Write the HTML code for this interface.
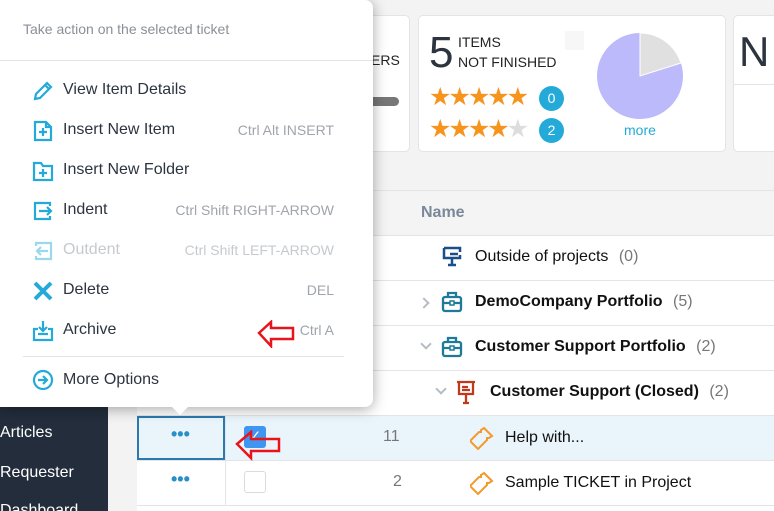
<!DOCTYPE html>
<html><head><meta charset="utf-8"><style>
*{box-sizing:border-box;margin:0;padding:0}
html,body{width:774px;height:511px;overflow:hidden}
body{background:#f3f3f3;font-family:"Liberation Sans",sans-serif;position:relative}
.abs{position:absolute}
.side{left:0;top:0;width:108px;height:511px;background:#232d3b}
.side div{position:absolute;left:0;color:#fff;font-size:16px}
.card{background:#fff;border:1px solid #e2e4e8;border-radius:5px;top:15px;height:137px}
.table{left:137px;top:190px;width:637px;height:321px;background:#fff;border-top:1px solid #e2e4e8}
.row{position:absolute;left:137px;width:637px;border-bottom:1px solid #e2e4e8;background:#fff}
.txt{position:absolute;font-size:16px;color:#111}
.pop{left:0;top:0;width:373px;height:407px;background:#fff;border-radius:0 8px 8px 0;box-shadow:0 2px 14px rgba(0,0,0,.35)}
.mi{position:absolute;left:63px;font-size:16px;color:#2c3440}
.sc{position:absolute;right:39px;font-size:14px;color:#a0a4ab}
.ic{position:absolute;left:32px;width:22px;height:22px}
.star{color:#f7941d;font-size:25px;letter-spacing:-3px}
.chev{position:absolute;width:8px;height:8px;border-right:2px solid #b5bcc4;border-bottom:2px solid #b5bcc4}
.dots{position:absolute;color:#2a8fc7;font-size:18px;font-weight:bold;letter-spacing:0px}
</style></head><body>
<div class="abs side">
<div style="top:424px">Articles</div>
<div style="top:464px">Requester</div>
<div style="top:502px">Dashboard</div>
</div>
<div class="abs card" style="left:300px;width:110px"><div class="abs" style="left:70px;top:36px;font-size:14px;color:#222">ERS</div><div class="abs" style="left:60px;top:81px;width:38px;height:9px;border-radius:5px;background:#777"></div></div>
<div class="abs card" style="left:418px;width:308px">
<div class="abs" style="left:10px;top:12px;font-size:44px;color:#2c3440;font-weight:300">5</div>
<div class="abs" style="left:39px;top:16px;font-size:14px;color:#222;line-height:20px">ITEMS<br>NOT FINISHED</div>
<div class="abs" style="left:146px;top:15px;width:19px;height:19px;background:#f7f7f7"></div>
<div class="abs star" style="left:10px;top:66px">★★★★★</div>
<div class="abs star" style="left:10px;top:98px">★★★★<span style="color:#ddd">★</span></div>
<div class="abs" style="left:120px;top:70px;width:25px;height:25px;border-radius:50%;background:#24aad8;color:#fff;font-size:14px;text-align:center;line-height:25px">0</div>
<div class="abs" style="left:120px;top:102px;width:25px;height:25px;border-radius:50%;background:#24aad8;color:#fff;font-size:14px;text-align:center;line-height:25px">2</div>
<svg class="abs" style="left:176px;top:15px" width="90" height="90" viewBox="-45 -45 90 90"><circle r="43" fill="#bdbafc"/><path d="M0 0 L0 -43 A43 43 0 0 1 41 -13 Z" fill="#e0e0e0" stroke="#fff" stroke-width="1"/></svg>
<div class="abs" style="left:205px;top:106px;font-size:14px;color:#24aad8">more</div>
</div>
<div class="abs card" style="left:733px;width:60px;border-radius:5px 0 0 5px"><div class="abs" style="left:5px;top:12px;font-size:42px;color:#2c3440">N</div><div class="abs" style="left:0;top:68px;width:60px;border-top:1px solid #e2e4e8"></div></div>
<div class="abs table"></div>
<div class="row" style="top:191px;height:45px;background:#f4f4f4"><div class="txt" style="left:284px;top:13px;color:#7a8899;font-weight:bold;font-size:16px">Name</div></div>
<div class="row" style="top:236px;height:45px"><svg class="abs" style="left:304px;top:9px" width="22" height="24" viewBox="0 0 22 24"><path d="M3 3h16v4M3 3v10h16V10M9 9h8M11 13v6M7 20h8" fill="none" stroke="#1b4f8a" stroke-width="2.5"/></svg><div class="txt" style="left:338px;top:12px">Outside of projects <span style="color:#777;margin-left:6px">(0)</span></div></div>
<div class="row" style="top:281px;height:45px"><div class="chev" style="left:283px;top:18px;transform:rotate(-45deg)"></div><svg class="abs" style="left:304px;top:9px" width="22" height="24" viewBox="0 0 22 24"><rect x="2" y="7" width="18" height="14" rx="2" fill="none" stroke="#1e7a96" stroke-width="2.3"/><path d="M7 7V3h8v4M2 13h18" fill="none" stroke="#1e7a96" stroke-width="2.3"/><rect x="9" y="11" width="4" height="4" fill="#fff" stroke="#1e7a96" stroke-width="1.5"/></svg><div class="txt" style="left:338px;top:12px;font-weight:bold">DemoCompany&nbsp;Portfolio <span style="color:#777;font-weight:normal;margin-left:6px">(5)</span></div></div>
<div class="row" style="top:326px;height:45px"><div class="chev" style="left:285px;top:14px;transform:rotate(45deg)"></div><svg class="abs" style="left:304px;top:9px" width="22" height="24" viewBox="0 0 22 24"><rect x="2" y="7" width="18" height="14" rx="2" fill="none" stroke="#1e7a96" stroke-width="2.3"/><path d="M7 7V3h8v4M2 13h18" fill="none" stroke="#1e7a96" stroke-width="2.3"/><rect x="9" y="11" width="4" height="4" fill="#fff" stroke="#1e7a96" stroke-width="1.5"/></svg><div class="txt" style="left:338px;top:12px;font-weight:bold">Customer Support Portfolio <span style="color:#777;font-weight:normal;margin-left:6px">(2)</span></div></div>
<div class="row" style="top:371px;height:45px"><div class="chev" style="left:300px;top:14px;transform:rotate(45deg)"></div><svg class="abs" style="left:318px;top:8px" width="22" height="26" viewBox="0 0 22 26"><path d="M2 3h18M4 3v12h14V3M7 8h6M7 11h8M11 15v9M8 24h6" fill="none" stroke="#c0391b" stroke-width="2.3"/></svg><div class="txt" style="left:353px;top:12px;font-weight:bold">Customer Support (Closed) <span style="color:#777;font-weight:normal;margin-left:6px">(2)</span></div></div>
<div class="row" style="top:416px;height:45px;background:#eaf5fb"></div>
<div class="row" style="top:461px;height:45px"></div>
<div class="abs" style="left:225px;top:416px;height:90px;border-left:1px solid #e2e4e8"></div>
<div class="abs" style="left:137px;top:416px;width:88px;height:44px;border:2px solid #2a7ab0;background:#eaf5fb"></div>
<div class="dots" style="left:171px;top:424px">•••</div>
<div class="dots" style="left:171px;top:469px">•••</div>
<div class="abs" style="left:244px;top:426px;width:22px;height:22px;border-radius:3px;background:#3f96f0;color:#fff;font-size:15px;text-align:center;line-height:22px">✓</div>
<div class="abs" style="left:244px;top:471px;width:22px;height:22px;border-radius:3px;border:1px solid #d8dbe0;background:#fff"></div>
<div class="txt" style="left:383px;top:428px;color:#777">11</div>
<div class="txt" style="left:393px;top:473px;color:#777">2</div>
<svg class="abs" style="left:470px;top:426px" width="24" height="24" viewBox="0 0 24 24"><path d="M14 2l8 8-3 2-2 0 0 2-9 9-8-8 9-9h2v-2z" fill="none" stroke="#f39a2b" stroke-width="2"/></svg>
<svg class="abs" style="left:470px;top:471px" width="24" height="24" viewBox="0 0 24 24"><path d="M14 2l8 8-3 2-2 0 0 2-9 9-8-8 9-9h2v-2z" fill="none" stroke="#f39a2b" stroke-width="2"/></svg>
<div class="txt" style="left:505px;top:429px">Help with...</div>
<div class="txt" style="left:505px;top:474px">Sample TICKET in Project</div>
<svg class="abs" style="left:235px;top:430px" width="48" height="32" viewBox="0 0 48 32"><path d="M2 14L16 2v7h28v12H16v7z" fill="none" stroke="#e8141c" stroke-width="2.5"/></svg>
<div class="abs pop">
<div class="abs" style="left:23px;top:21px;font-size:14px;color:#8a9098">Take action on the selected ticket</div>
<div class="abs" style="left:0;top:60px;width:373px;border-top:1px solid #e2e4e8"></div>
<svg class="ic" style="top:80px" viewBox="0 0 22 22"><path d="M3 19l1-5L15 3l4 4L8 18z M13 5l4 4" fill="none" stroke="#24aad8" stroke-width="2.2"/></svg>
<div class="mi" style="top:81px">View Item Details</div>
<svg class="ic" style="top:120px" viewBox="0 0 22 22"><path d="M3 2h11l5 5v13H3z M14 2v5h5 M11 8v8M7 12h8" fill="none" stroke="#24aad8" stroke-width="2.2"/></svg>
<div class="mi" style="top:121px">Insert New Item</div><div class="sc" style="top:122px">Ctrl Alt INSERT</div>
<svg class="ic" style="top:160px" viewBox="0 0 22 22"><path d="M2 3h7l2 3h9v14H2z M11 9v8M7 13h8" fill="none" stroke="#24aad8" stroke-width="2.2"/></svg>
<div class="mi" style="top:161px">Insert New Folder</div>
<svg class="ic" style="top:200px" viewBox="0 0 22 22"><path d="M18 6V3H3v16h15v-3 M7 11h12M15 7l4 4-4 4" fill="none" stroke="#24aad8" stroke-width="2.2"/></svg>
<div class="mi" style="top:201px">Indent</div><div class="sc" style="top:202px">Ctrl Shift RIGHT-ARROW</div>
<svg class="ic" style="top:240px;opacity:.45" viewBox="0 0 22 22"><path d="M4 6V3h15v16H4v-3 M16 11H5M9 7l-4 4 4 4" fill="none" stroke="#24aad8" stroke-width="2.2"/></svg>
<div class="mi" style="top:241px;color:#c6cace">Outdent</div><div class="sc" style="top:242px;color:#c6cace">Ctrl Shift LEFT-ARROW</div>
<svg class="ic" style="top:280px" viewBox="0 0 22 22"><path d="M3 3l16 16M19 3L3 19" fill="none" stroke="#24aad8" stroke-width="4"/></svg>
<div class="mi" style="top:281px">Delete</div><div class="sc" style="top:282px">DEL</div>
<svg class="ic" style="top:320px" viewBox="0 0 22 22"><path d="M11 1v10M7 7l4 4 4-4 M6 9H2v11h18V9h-4 M6 14h10" fill="none" stroke="#24aad8" stroke-width="2.2"/></svg>
<div class="mi" style="top:321px">Archive</div><div class="sc" style="top:322px">Ctrl A</div>
<svg class="abs" style="left:257px;top:320px" width="38" height="28" viewBox="0 0 38 28"><path d="M2 13L14 2v6h22v11H14v7z" fill="none" stroke="#e8141c" stroke-width="2.5"/></svg>
<div class="abs" style="left:23px;top:356px;width:321px;border-top:1px solid #e2e4e8"></div>
<svg class="ic" style="top:369px" viewBox="0 0 22 22"><circle cx="11" cy="11" r="9" fill="none" stroke="#24aad8" stroke-width="2.2"/><path d="M6 11h9M11 7l4 4-4 4" fill="none" stroke="#24aad8" stroke-width="2.2"/></svg>
<div class="mi" style="top:371px">More Options</div>
</div>
<div class="abs" style="left:171px;top:406px;width:0;height:0;border-left:9px solid transparent;border-right:9px solid transparent;border-top:9px solid #fff"></div>
</body></html>
